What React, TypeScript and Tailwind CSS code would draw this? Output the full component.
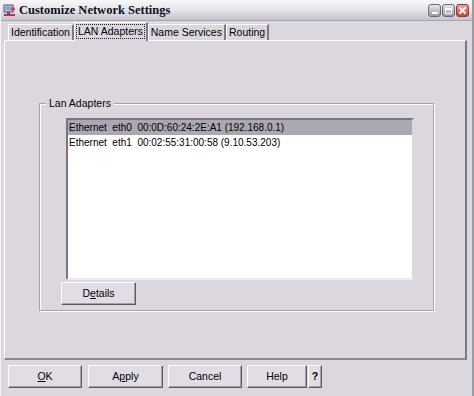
import React from 'react';

const sans = { fontFamily: '"Liberation Sans", Arial, sans-serif' };

function TitleIcon() {
  return (
    <svg width="13" height="13" viewBox="0 0 13 13">
      <rect x="1" y="1" width="9" height="7" fill="#c8c4d8" stroke="#5a4f86" />
      <rect x="2.5" y="2.5" width="6" height="4" fill="#8ea0d8" />
      <rect x="4" y="8" width="3" height="2" fill="#5a4f86" />
      <rect x="1" y="10" width="11" height="2" fill="#c0303a" />
      <circle cx="10" cy="5" r="2" fill="#d04050" />
    </svg>
  );
}

function WinButton({ kind }: { kind: 'min' | 'max' | 'close' }) {
  const base = 'w-[13px] h-[13px] rounded-[3px] flex items-center justify-center border';
  if (kind === 'close') {
    return (
      <div className={`${base} border-[#8a3a3a] bg-gradient-to-b from-[#f0a090] to-[#c8483c]`}>
        <svg width="9" height="9" viewBox="0 0 9 9">
          <path d="M1.5 1.5 L7.5 7.5 M7.5 1.5 L1.5 7.5" stroke="#fff" strokeWidth="1.8" />
        </svg>
      </div>
    );
  }
  return (
    <div className={`${base} border-[#6a6a78] bg-gradient-to-b from-[#e8e8ee] to-[#9a9aa8]`}>
      {kind === 'min' ? (
        <div className="w-[6px] h-[2px] bg-[#fff] mt-[4px]" />
      ) : (
        <div className="w-[7px] h-[6px] border border-[#fff] border-t-2" />
      )}
    </div>
  );
}

function Tab({ label, active }: { label: string; active?: boolean }) {
  if (active) {
    return (
      <div className="relative z-10 h-[19px] -mb-px bg-[#dcd7df] border-t border-l border-[#ffffff] border-r-2 border-r-[#7c7884] px-[1px] pt-[1px] flex items-start">
        <span className="border border-dotted border-[#222] px-[1px] text-[10.5px] leading-[13px] text-black">{label}</span>
      </div>
    );
  }
  return (
    <div className="h-[16px] mt-[2px] border-t border-l border-[#ffffff] border-r-2 border-r-[#7c7884] px-[2px] pt-[1px] text-[10.5px] leading-[13px] text-black">
      {label}
    </div>
  );
}

function Btn({ children, w }: { children: React.ReactNode; w: string }) {
  return (
    <div
      className={`${w} h-[23px] flex items-center justify-center border border-t-[#ffffff] border-l-[#ffffff] border-r-[#5e5a64] border-b-[#5e5a64] shadow-[inset_-1px_-1px_0_#a4a0aa] bg-[#e2dde5] text-[10.5px] text-black`}
    >
      {children}
    </div>
  );
}

export default function App() {
  const rows = [
    'Ethernet  eth0  00:0D:60:24:2E:A1 (192.168.0.1)',
    'Ethernet  eth1  00:02:55:31:00:58 (9.10.53.203)',
  ];

  return (
    <div
      className="w-[474px] h-[396px] bg-[#dcd7df] flex flex-col border-l border-l-[#f4f2f6] border-r-2 border-r-[#9c98a4] overflow-hidden"
      style={sans}
    >
      {/* Title bar */}
      <div className="h-[21px] shrink-0 flex items-center pl-[2px] pr-[3px] bg-gradient-to-b from-[#f8f8fa] via-[#e4e4ea] to-[#c6c4ce] border-b border-[#a8a4b0]">
        <TitleIcon />
        <span
          className="ml-[3px] text-[12.5px] font-bold text-[#101018] leading-none"
          style={{ fontFamily: '"Liberation Serif", "Times New Roman", serif' }}
        >
          Customize Network Settings
        </span>
        <div className="ml-auto flex gap-[1px] mt-[1px]">
          <WinButton kind="min" />
          <WinButton kind="max" />
          <WinButton kind="close" />
        </div>
      </div>

      {/* Tabs */}
      <div className="pl-[7px] pt-[1px] flex items-end">
        <Tab label="Identification" />
        <Tab label="LAN Adapters" active />
        <Tab label="Name Services" />
        <Tab label="Routing" />
      </div>

      {/* Tab panel */}
      <div className="ml-[3px] w-[463px] h-[320px] border-t border-l border-[#ffffff] border-r-2 border-r-[#7c7884] border-b-2 border-b-[#8a8692] pt-[62px] pl-[34px]">
        {/* Group box */}
        <div className="relative w-[395px] h-[208px] border border-[#a6a2ac] shadow-[1px_1px_0_#ffffff,inset_1px_1px_0_#ffffff]">
          <span className="absolute -top-[7px] left-[6px] bg-[#dcd7df] px-[3px] text-[10.5px] leading-[13px] text-black">
            Lan Adapters
          </span>
          <div className="ml-[26px] mt-[14px] w-[348px] h-[162px] bg-white border-2 border-t-[#7a7680] border-l-[#7a7680] border-r-[#dcd7df] border-b-[#eceaee]">
            {rows.map((r, i) => (
              <div
                key={r}
                className={`h-[15px] pl-[1px] text-[10px] leading-[15px] text-black whitespace-pre ${i === 0 ? 'bg-[#aaa8b2]' : ''}`}
              >
                {r}
              </div>
            ))}
          </div>
          <div className="ml-[21px] mt-[2px]">
            <Btn w="w-[75px]">
              <span>
                D<span className="underline">e</span>tails
              </span>
            </Btn>
          </div>
        </div>
      </div>

      {/* Bottom buttons */}
      <div className="flex items-center pl-[7px] pt-[5px]">
        <Btn w="w-[74px]">
          <span>
            <span className="underline">O</span>K
          </span>
        </Btn>
        <div className="w-[6px]" />
        <Btn w="w-[75px]">
          <span>
            A<span className="underline">p</span>ply
          </span>
        </Btn>
        <div className="w-[5px]" />
        <Btn w="w-[74px]">Cancel</Btn>
        <div className="w-[5px]" />
        <Btn w="w-[60px]">Help</Btn>
        <div className="w-[1px]" />
        <Btn w="w-[14px]">
          <span className="font-bold">?</span>
        </Btn>
      </div>
    </div>
  );
}
